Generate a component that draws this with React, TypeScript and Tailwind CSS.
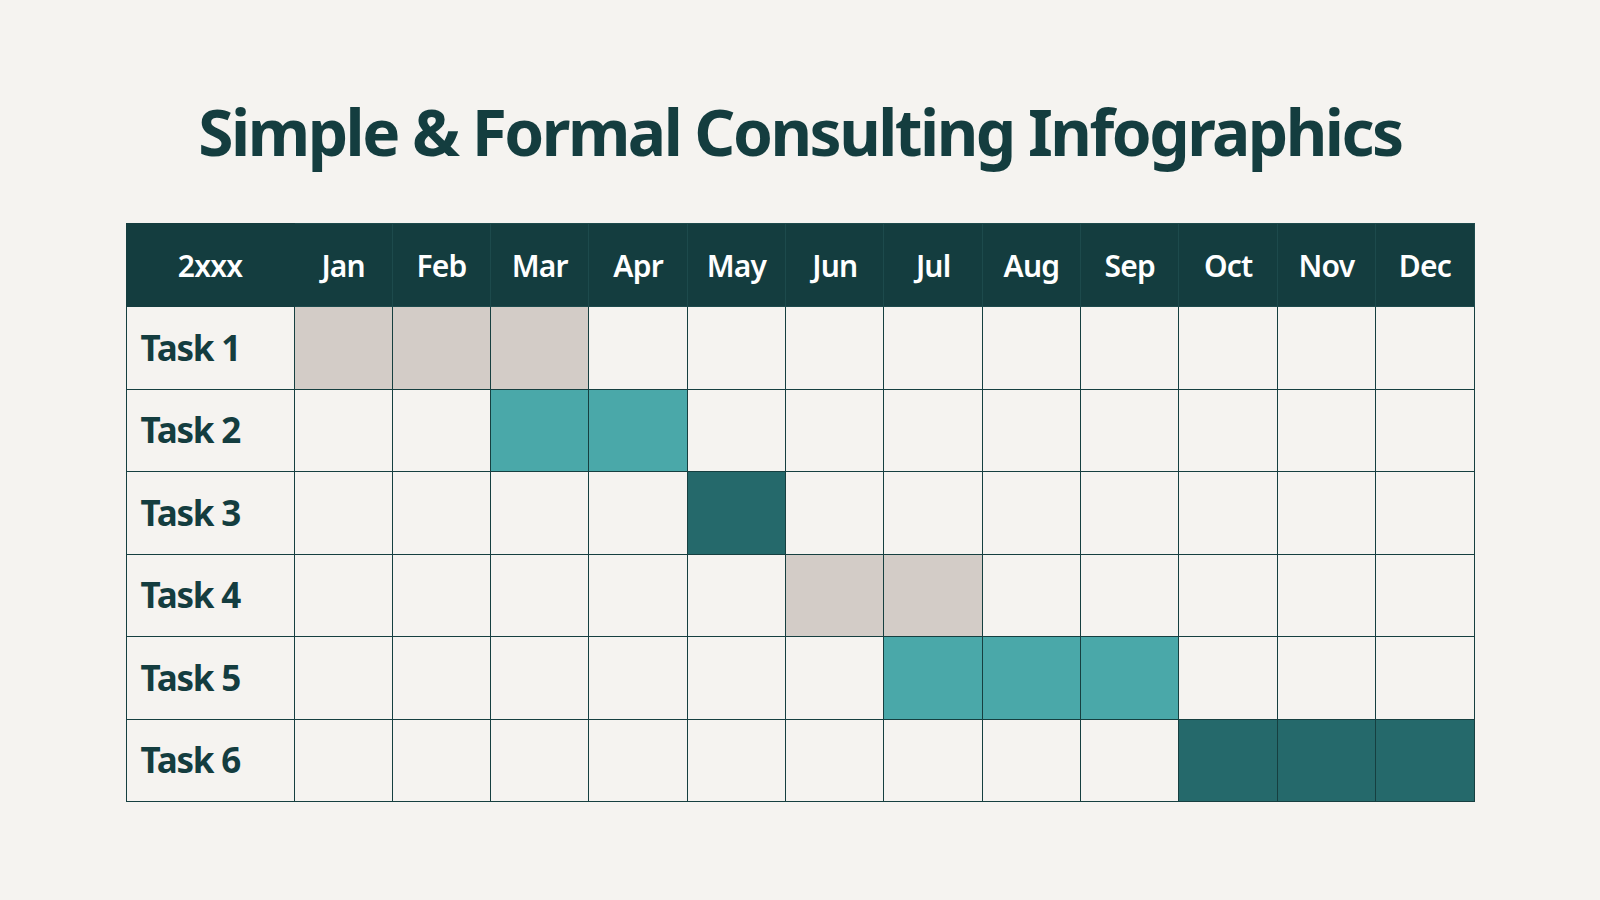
const MONTHS = ['Jan', 'Feb', 'Mar', 'Apr', 'May', 'Jun', 'Jul', 'Aug', 'Sep', 'Oct', 'Nov', 'Dec'];

const FILL: Record<string, string> = {
  sand: 'bg-[#d3ccc7]',
  teal: 'bg-[#4aa8a9]',
  deep: 'bg-[#25696b]',
};

// month index -> colour, per task
const TASKS: { name: string; spans: Record<number, string> }[] = [
  { name: 'Task 1', spans: { 0: 'sand', 1: 'sand', 2: 'sand' } },
  { name: 'Task 2', spans: { 2: 'teal', 3: 'teal' } },
  { name: 'Task 3', spans: { 4: 'deep' } },
  { name: 'Task 4', spans: { 5: 'sand', 6: 'sand' } },
  { name: 'Task 5', spans: { 6: 'teal', 7: 'teal', 8: 'teal' } },
  { name: 'Task 6', spans: { 9: 'deep', 10: 'deep', 11: 'deep' } },
];

export default function App() {
  return (
    <div
      className="h-[900px] w-full bg-[#f5f3f0] flex flex-col items-center"
      style={{ fontFamily: '"Noto Sans", "Open Sans", sans-serif' }}
    >
      <h1 className="mt-[88px] text-[64px] leading-[88px] font-bold tracking-[-2.5px] text-[#143d3f]">
        Simple &amp; Formal Consulting Infographics
      </h1>

      <table className="mt-[47px] w-[1349px] border-collapse table-fixed">
        <colgroup>
          <col className="w-[168px]" />
          {MONTHS.map((m) => (
            <col key={m} />
          ))}
        </colgroup>
        <thead>
          <tr className="h-[83px] bg-[#143d3f] text-white">
            <th className="border border-[#143d3f] text-[30px] font-semibold tracking-[-0.8px]">2xxx</th>
            {MONTHS.map((m) => (
              <th
                key={m}
                className="border border-[#1d4a4c] text-[30px] font-semibold tracking-[-0.8px]"
              >
                {m}
              </th>
            ))}
          </tr>
        </thead>
        <tbody>
          {TASKS.map((task) => (
            <tr key={task.name} className="h-[82.5px]">
              <td className="border-[1.5px] border-[#163f40] pl-[14px] text-left text-[35px] font-bold tracking-[-1.2px] text-[#143d3f]">
                {task.name}
              </td>
              {MONTHS.map((m, i) => (
                <td
                  key={m}
                  className={`border-[1.5px] border-[#163f40] ${task.spans[i] ? FILL[task.spans[i]] : ''}`}
                />
              ))}
            </tr>
          ))}
        </tbody>
      </table>
    </div>
  );
}
